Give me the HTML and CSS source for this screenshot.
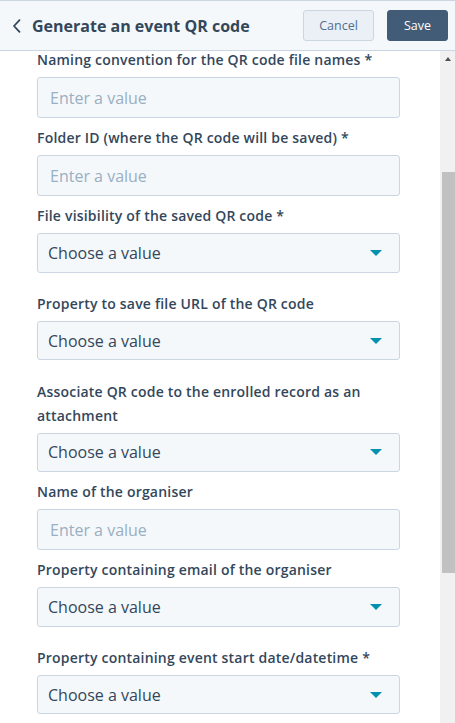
FILE: index.html
```html
<!DOCTYPE html>
<html lang="en">
<head>
<meta charset="utf-8">
<title>Generate an event QR code</title>
<link rel="stylesheet" href="styles.css">
</head>
<body>
<div class="page">
  <header class="topbar">
    <div class="title-wrap">
      <svg class="back" width="10" height="14" viewBox="0 0 10 14" aria-hidden="true"><path d="M7.5 1.2 L2 7 L7.5 12.8" fill="none" stroke="#33475b" stroke-width="1.8" stroke-linecap="round" stroke-linejoin="round"/></svg>
      <h1 class="title">Generate an event QR code</h1>
    </div>
    <div class="actions">
      <button class="btn btn-cancel">Cancel</button>
      <button class="btn btn-save">Save</button>
    </div>
  </header>
  <div class="body">
    <main class="form">
      <div class="group">
        <div class="label">Naming convention for the QR code file names *</div>
        <div class="input placeholder">Enter a value</div>
      </div>
      <div class="group">
        <div class="label">Folder ID (where the QR code will be saved) *</div>
        <div class="input placeholder">Enter a value</div>
      </div>
      <div class="group wide">
        <div class="label">File visibility of the saved QR code *</div>
        <div class="select"><span>Choose a value</span><i class="caret"></i></div>
      </div>
      <div class="group wide">
        <div class="label">Property to save file URL of the QR code</div>
        <div class="select"><span>Choose a value</span><i class="caret"></i></div>
      </div>
      <div class="group">
        <div class="label">Associate QR code to the enrolled record as an attachment</div>
        <div class="select"><span>Choose a value</span><i class="caret"></i></div>
      </div>
      <div class="group">
        <div class="label">Name of the organiser</div>
        <div class="input placeholder">Enter a value</div>
      </div>
      <div class="group wide">
        <div class="label">Property containing email of the organiser</div>
        <div class="select"><span>Choose a value</span><i class="caret"></i></div>
      </div>
      <div class="group wide">
        <div class="label">Property containing event start date/datetime *</div>
        <div class="select"><span>Choose a value</span><i class="caret"></i></div>
      </div>
    </main>
    <div class="scrollbar">
      <i class="arrow-up"></i>
      <div class="thumb"></div>
    </div>
  </div>
</div>
</body>
</html>
```
FILE: styles.css
```css
* { box-sizing: border-box; }
html, body { margin: 0; padding: 0; }
body {
  width: 455px;
  height: 723px;
  overflow: hidden;
  background: #ffffff;
  font-family: "Open Sans", "Liberation Sans", sans-serif;
  color: #33475b;
}
.page { display: flex; flex-direction: column; height: 723px; }
.topbar {
  flex: 0 0 51px;
  height: 51px;
  display: flex;
  align-items: center;
  justify-content: space-between;
  background: #f5f8fa;
  border-top: 1px solid #cbd6e2;
  border-bottom: 1px solid #cbd6e2;
  padding: 0 7px 0 12px;
}
.title-wrap { display: flex; align-items: center; gap: 10px; }
.back { display: block; }
.title {
  margin: 0;
  font-size: 16px;
  font-weight: 700;
  color: #33475b;
  letter-spacing: 0;
}
.actions { display: flex; gap: 13px; }
.btn {
  height: 31px;
  border-radius: 3px;
  font-family: inherit;
  font-size: 12.5px;
  padding: 0;
  cursor: pointer;
}
.btn-cancel {
  width: 71px;
  background: #eaf0f6;
  border: 1px solid #cbd6e2;
  color: #506e91;
}
.btn-save {
  width: 61px;
  background: #425b76;
  border: 1px solid #425b76;
  color: #ffffff;
}
.body { flex: 1; display: flex; overflow: hidden; }
.form {
  flex: 1;
  padding: 0 40px 0 37px;
  margin-top: -3px;
}
.group { margin-bottom: 8px; }
.group.wide { margin-bottom: 19.3px; }
.label {
  font-size: 14px;
  font-weight: 600;
  line-height: 24px;
  letter-spacing: 0.2px;
  margin-bottom: 5px;
  color: #33475b;
}
.input, .select {
  width: 363px;
  background: #f5f8fa;
  border: 1px solid #cbd6e2;
  border-radius: 3px;
  font-size: 16px;
  display: flex;
  align-items: center;
}
.input { height: 41px; padding-left: 12px; }
.placeholder { color: #99afc4; }
.select {
  height: 39.5px;
  padding: 0 17px 0 10px;
  justify-content: space-between;
  color: #33475b;
}
.caret {
  width: 0;
  height: 0;
  border-left: 6px solid transparent;
  border-right: 6px solid transparent;
  border-top: 6px solid #0091ae;
}
.scrollbar {
  flex: 0 0 15px;
  width: 15px;
  background: #f1f1f1;
  display: flex;
  flex-direction: column;
  align-items: flex-end;
}
.arrow-up {
  align-self: center;
  margin-top: 6px;
  width: 0;
  height: 0;
  border-left: 3.5px solid transparent;
  border-right: 3.5px solid transparent;
  border-bottom: 4px solid #505050;
}
.thumb {
  margin-top: 111px;
  width: 13px;
  height: 401px;
  background: #c1c1c1;
}
```
